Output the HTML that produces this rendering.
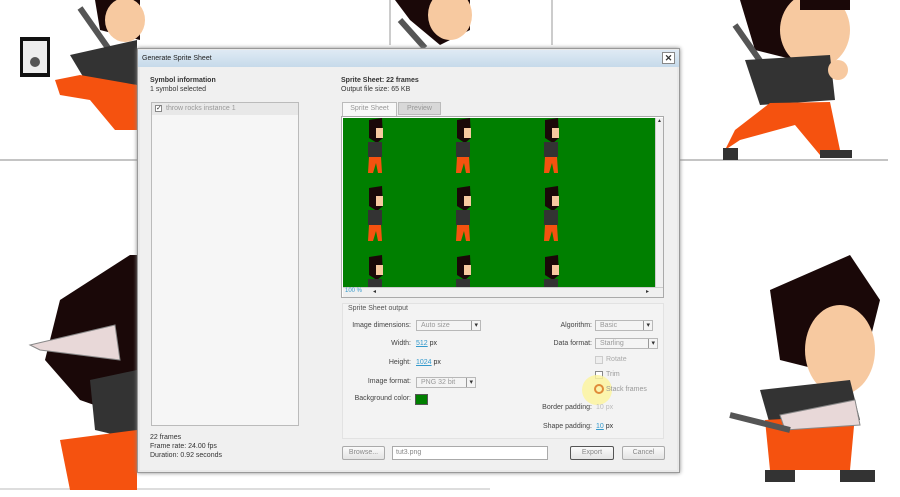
<!DOCTYPE html>
<html><head><meta charset="utf-8"><style>
*{margin:0;padding:0;box-sizing:border-box}
body{width:900px;height:497px;overflow:hidden;background:#fff;position:relative;font-family:"Liberation Sans",sans-serif;font-size:7px;color:#333}
.a{position:absolute;white-space:nowrap}
.dd{position:absolute;height:11px;border:1px solid #b8b8b8;background:#f4f4f4;color:#999;font-size:7px;line-height:9px;padding-left:4px}
.dd:after{content:"▾";position:absolute;right:2px;top:0;color:#333;border-left:1px solid #999;padding-left:2px;font-size:7px}
.btn{position:absolute;height:14px;border:1px solid #aaa;background:linear-gradient(#fafafa,#e4e4e4);color:#888;text-align:center;line-height:12px;font-size:7px;border-radius:2px}
.lbl{position:absolute;text-align:right;white-space:nowrap;color:#444}
.cb{position:absolute;width:8px;height:8px;border:1px solid #888;background:#fff}
.lnk{color:#39c;text-decoration:underline}
</style></head><body>
<svg class="a" style="left:0;top:0" width="900" height="497">
 <line x1="0" y1="160" x2="137" y2="160" stroke="#888"/>
 <line x1="680" y1="160" x2="888" y2="160" stroke="#888"/>
 <line x1="390" y1="0" x2="390" y2="45" stroke="#999"/>
 <line x1="552" y1="0" x2="552" y2="45" stroke="#999"/>
 <line x1="0" y1="489" x2="490" y2="489" stroke="#bbb"/>
 <rect x="20" y="37" width="30" height="40" fill="#111"/><rect x="23" y="41" width="24" height="32" fill="#eee"/><circle cx="35" cy="62" r="5" fill="#555"/>
 <!-- top-left char -->
 <path d="M95 0 L140 0 L140 40 L100 30Z" fill="#1a0808"/>
 <ellipse cx="125" cy="20" rx="20" ry="22" fill="#f7c9a0"/>
 <path d="M80 8 L120 65" stroke="#555" stroke-width="6"/>
 <path d="M70 55 L137 40 L137 85 L85 80Z" fill="#333"/>
 <path d="M55 80 L80 75 L137 85 L137 130 L115 130 L90 100 L60 95Z" fill="#f5520f"/>
 <!-- top-middle -->
 <path d="M395 0 L470 0 L470 30 L440 45 L410 20Z" fill="#1a0808"/>
 <ellipse cx="450" cy="15" rx="22" ry="25" fill="#f7c9a0"/>
 <path d="M400 20 L425 48" stroke="#555" stroke-width="6"/>
 <!-- top-right -->
 <path d="M740 0 L800 0 L795 60 L755 50Z" fill="#1a0808"/>
 <ellipse cx="815" cy="30" rx="35" ry="38" fill="#f7c9a0"/>
 <path d="M800 0 L850 0 L850 10 L800 10Z" fill="#1a0808"/>
 <path d="M735 25 L770 75" stroke="#555" stroke-width="6"/>
 <path d="M745 60 L830 55 L835 100 L760 105Z" fill="#333"/>
 <circle cx="838" cy="70" r="10" fill="#f7c9a0"/>
 <path d="M770 103 L830 102 L840 150 L820 155 L795 125 L740 140 L725 150 L735 130Z" fill="#f5520f"/>
 <rect x="723" y="148" width="15" height="12" fill="#333"/><rect x="820" y="150" width="32" height="8" fill="#333"/>
 <!-- bottom-left -->
 <path d="M60 300 L130 255 L137 255 L137 420 L80 400 L45 360Z" fill="#1a0808"/>
 <path d="M30 345 L115 325 L120 360 L40 350Z" fill="#e8d8d8" stroke="#888"/>
 <path d="M90 380 L137 370 L137 440 L95 430Z" fill="#333"/>
 <path d="M60 440 L137 430 L137 490 L70 490Z" fill="#f5520f"/>
 <!-- bottom-right -->
 <path d="M770 290 L850 255 L880 300 L860 380 L780 360Z" fill="#1a0808"/>
 <ellipse cx="840" cy="350" rx="35" ry="45" fill="#f7c9a0"/>
 <path d="M760 390 L850 380 L860 420 L770 425Z" fill="#333"/>
 <path d="M765 420 L855 415 L850 470 L770 470Z" fill="#f5520f"/>
 <path d="M780 415 L855 400 L860 425 L785 430Z" fill="#e8d8d8" stroke="#888"/>
 <rect x="765" y="470" width="30" height="12" fill="#333"/><rect x="840" y="470" width="35" height="12" fill="#333"/>
 <path d="M730 415 L790 430" stroke="#555" stroke-width="6"/>
</svg>

<!-- dialog -->
<div class="a" style="left:137px;top:48px;width:543px;height:425px;background:#e9e9e9;border:1px solid #999;box-shadow:0 0 4px #888"></div>
<div class="a" style="left:138px;top:50px;width:541px;height:17px;background:linear-gradient(#dfeaf4,#c6daea)"></div>
<div class="a" style="left:142px;top:55px;color:#222">Generate Sprite Sheet</div>
<div class="a" style="left:662px;top:52px;width:13px;height:12px;border:1px solid #888;background:#fff;text-align:center;font-weight:bold;font-size:9px;line-height:10px">✕</div>
<div class="a" style="left:140px;top:67px;width:537px;height:403px;background:#f0f0f0"></div>

<div class="a" style="left:150px;top:77px;font-weight:bold">Symbol information</div>
<div class="a" style="left:150px;top:86px">1 symbol selected</div>
<div class="a" style="left:151px;top:102px;width:148px;height:324px;background:#f6f6f6;border:1px solid #bbb"></div>
<div class="a" style="left:152px;top:103px;width:146px;height:12px;background:#e8e8e8"></div>
<div class="cb" style="left:155px;top:105px;width:7px;height:7px;font-size:7px;line-height:5px">✓</div>
<div class="a" style="left:166px;top:105px;color:#999">throw rocks instance 1</div>
<div class="a" style="left:150px;top:433px;line-height:9px">22 frames<br>Frame rate: 24.00 fps<br>Duration: 0.92 seconds</div>

<div class="a" style="left:341px;top:77px;font-weight:bold">Sprite Sheet: 22 frames</div>
<div class="a" style="left:341px;top:86px">Output file size: 65 KB</div>
<div class="a" style="left:342px;top:102px;width:55px;height:14px;border:1px solid #bbb;border-bottom:none;background:#f8f8f8;color:#999;text-align:center;line-height:12px">Sprite Sheet</div>
<div class="a" style="left:398px;top:102px;width:43px;height:13px;border:1px solid #bbb;background:#d8d8d8;color:#999;text-align:center;line-height:12px">Preview</div>
<div class="a" style="left:341px;top:116px;width:323px;height:182px;border:1px solid #aaa;background:#fff"></div>
<div class="a" style="left:343px;top:118px;width:312px;height:169px;background:#007f00;overflow:hidden">
<svg width="312" height="169">
<defs><g id="s"><path d="M20 2 L33 0 L34 20 L28 25 L20 20Z" fill="#1a0808"/><rect x="27" y="10" width="7" height="10" fill="#f7c9a0"/><rect x="19" y="24" width="14" height="15" fill="#333"/><path d="M20 39 L32 39 L33 55 L29 55 L27 45 L24 55 L19 55Z" fill="#f5520f"/></g></defs>
<use href="#s" x="6" y="0"/><use href="#s" x="94" y="0"/><use href="#s" x="182" y="0"/>
<use href="#s" x="6" y="68"/><use href="#s" x="94" y="68"/><use href="#s" x="182" y="68"/>
<use href="#s" x="6" y="137"/><use href="#s" x="94" y="137"/><use href="#s" x="182" y="137"/>
</svg></div>
<div class="a" style="left:655px;top:118px;width:8px;height:169px;background:#f0f0f0;border-left:1px solid #ccc;font-size:5px;text-align:center">▲</div>
<div class="a" style="left:343px;top:287px;width:320px;height:10px;background:#f0f0f0;border-top:1px solid #ccc"></div>
<div class="a" style="left:345px;top:288px;color:#39c;font-size:6px">100 %</div>
<div class="a" style="left:373px;top:288px;font-size:6px">◂</div>
<div class="a" style="left:646px;top:288px;font-size:6px">▸</div>

<div class="a" style="left:342px;top:303px;width:322px;height:136px;background:#f3f3f3;border:1px solid #e2e2e2"></div>
<div class="a" style="left:348px;top:305px;color:#555">Sprite Sheet output</div>
<div class="lbl" style="right:489px;top:322px">Image dimensions:</div>
<div class="dd" style="left:416px;top:320px;width:65px">Auto size</div>
<div class="lbl" style="right:489px;top:340px">Width:</div>
<div class="a" style="left:416px;top:340px"><span class="lnk">512</span> px</div>
<div class="lbl" style="right:489px;top:359px">Height:</div>
<div class="a" style="left:416px;top:359px"><span class="lnk">1024</span> px</div>
<div class="lbl" style="right:489px;top:378px">Image format:</div>
<div class="dd" style="left:416px;top:377px;width:60px">PNG 32 bit</div>
<div class="lbl" style="right:489px;top:395px">Background color:</div>
<div class="a" style="left:415px;top:394px;width:13px;height:11px;background:#007f00;border:1px solid #555"></div>

<div class="lbl" style="right:308px;top:322px">Algorithm:</div>
<div class="dd" style="left:595px;top:320px;width:58px">Basic</div>
<div class="lbl" style="right:308px;top:340px">Data format:</div>
<div class="dd" style="left:595px;top:338px;width:63px">Starling</div>
<div class="cb" style="left:595px;top:356px;border-color:#ccc;background:#eee"></div>
<div class="a" style="left:606px;top:356px;color:#aaa">Rotate</div>
<div class="cb" style="left:595px;top:371px"></div>
<div class="a" style="left:606px;top:371px;color:#999">Trim</div>
<div class="a" style="left:582px;top:375px;width:30px;height:30px;border-radius:50%;background:#fbf3a0;opacity:.85"></div>
<div class="a" style="left:594px;top:384px;width:10px;height:10px;border-radius:50%;border:2px solid #e08b3a"></div>
<div class="a" style="left:606px;top:386px;color:#999">Stack frames</div>
<div class="lbl" style="right:308px;top:404px">Border padding:</div>
<div class="a" style="left:596px;top:404px;color:#bbb">10 px</div>
<div class="lbl" style="right:308px;top:423px">Shape padding:</div>
<div class="a" style="left:596px;top:423px"><span class="lnk">10</span> px</div>

<div class="btn" style="left:342px;top:446px;width:43px">Browse...</div>
<div class="a" style="left:392px;top:446px;width:156px;height:14px;border:1px solid #aaa;background:#fff;padding-left:3px;line-height:12px;color:#888">tut3.png</div>
<div class="btn" style="left:570px;top:446px;width:44px;border-color:#555">Export</div>
<div class="btn" style="left:622px;top:446px;width:43px">Cancel</div>
</body></html>
